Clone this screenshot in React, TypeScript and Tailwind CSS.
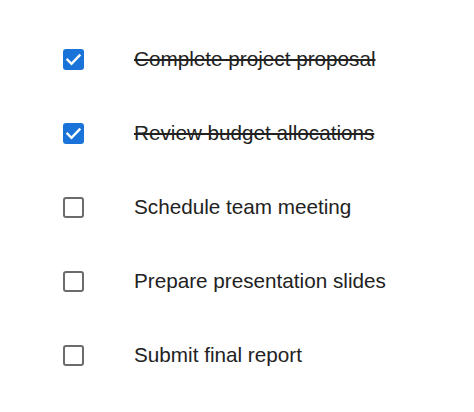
import { useState } from "react";

interface Task {
  id: number;
  text: string;
  done: boolean;
}

const initialTasks: Task[] = [
  { id: 1, text: "Complete project proposal", done: true },
  { id: 2, text: "Review budget allocations", done: true },
  { id: 3, text: "Schedule team meeting", done: false },
  { id: 4, text: "Prepare presentation slides", done: false },
  { id: 5, text: "Submit final report", done: false },
];

function Box({ checked }: { checked: boolean }) {
  if (checked) {
    return (
      <span className="flex h-[21px] w-[21px] items-center justify-center rounded-[3px] bg-[#1a73d9]">
        <svg viewBox="0 0 21 21" className="h-[21px] w-[21px]" fill="none">
          <path d="M4.5 10.8l4 4L16.5 6.5" stroke="white" strokeWidth="2.4" strokeLinecap="square" />
        </svg>
      </span>
    );
  }
  return <span className="block h-[21px] w-[21px] rounded-[3px] border-2 border-[#6b6b6b] bg-white" />;
}

export default function App() {
  const [tasks, setTasks] = useState(initialTasks);

  const toggle = (id: number) =>
    setTasks((prev) => prev.map((t) => (t.id === id ? { ...t, done: !t.done } : t)));

  return (
    <div className="h-[412px] w-[474px] bg-white pl-[63px] pt-[22px] font-['Liberation_Sans',Arial,sans-serif]">
      <ul>
        {tasks.map((t) => (
          <li key={t.id} className="flex h-[74px] cursor-pointer items-center" onClick={() => toggle(t.id)}>
            <Box checked={t.done} />
            <span
              className={`ml-[50px] text-[20.7px] text-[#222] ${t.done ? "line-through decoration-[#222]" : ""}`}
            >
              {t.text}
            </span>
          </li>
        ))}
      </ul>
    </div>
  );
}
